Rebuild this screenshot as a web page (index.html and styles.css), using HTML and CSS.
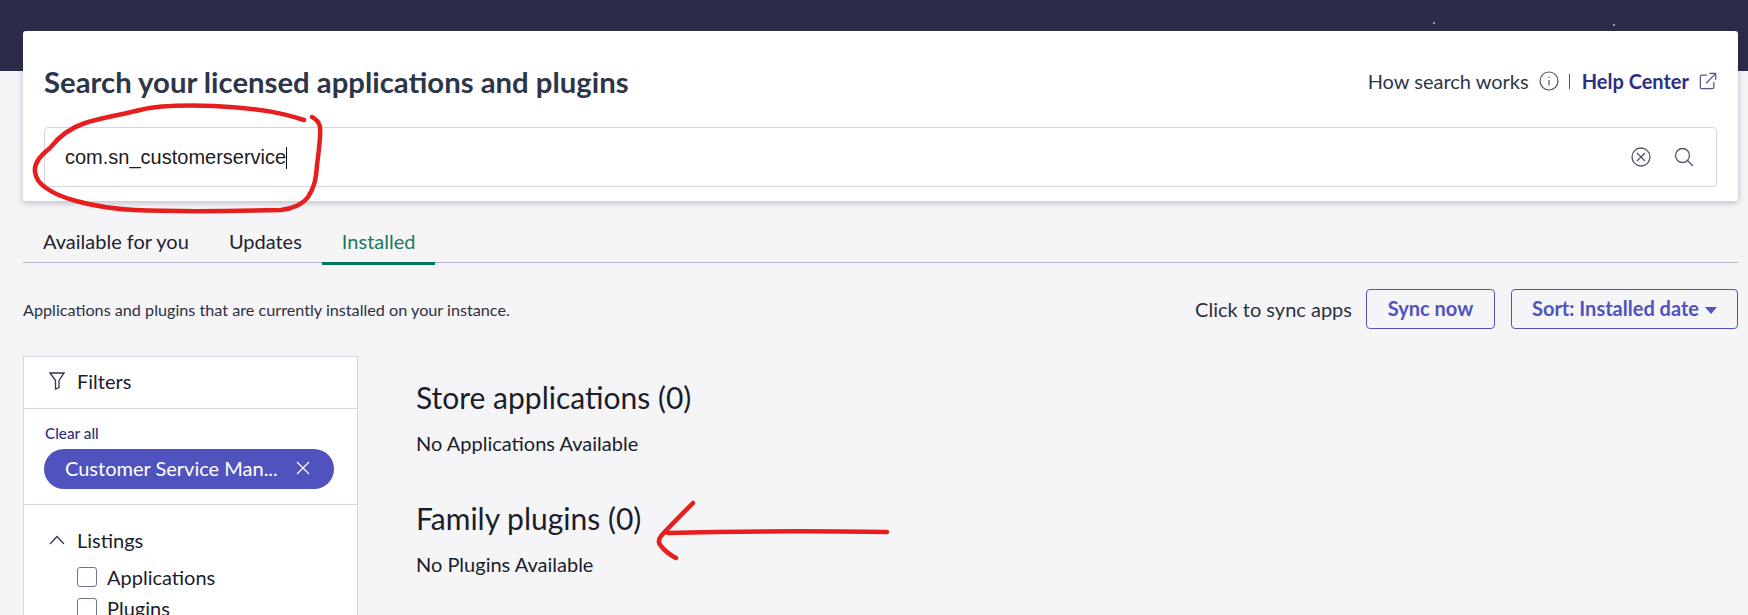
FILE: index.html
```html
<!DOCTYPE html>
<html lang="en">
  <head>
    <meta charset="UTF-8" />
    <meta name="viewport" content="width=device-width, initial-scale=1.0" />
    <title>Search your licensed applications and plugins</title>
    <link rel="stylesheet" href="styles.css">
  </head>
  <body>
    <header class="topbar"></header>
    <div class="page">
      <section class="search-card">
        <div class="search-head">
          <h1>Search your licensed applications and plugins</h1>
          <div class="search-links">
            <span>How search works</span>
            <svg class="icon-info" viewBox="0 0 20 20" width="20" height="20">
              <circle cx="10" cy="10" r="9" />
              <path d="M10 9v5.500M10 5.600v1.200" />
            </svg>
            <span class="sep"></span>
            <a href="#">Help Center</a>
            <svg class="icon-ext" viewBox="0 0 20 20" width="18" height="18">
              <path d="M9 3.500H3a1.500 1.500 0 0 0-1.500 1.500v12A1.500 1.500 0 0 0 3 18.500h12a1.500 1.500 0 0 0 1.500-1.500v-6" />
              <path d="M8 12.500 18.500 1.500M11.500 1.500h7v7" />
            </svg>
          </div>
        </div>
        <div class="search-box">
          <div class="search-value">com.sn_customerservice<span class="caret"></span></div>
          <svg class="icon-clear" viewBox="0 0 20 20" width="20" height="20">
            <circle cx="10" cy="10" r="9" />
            <path d="M6 6l8 8M14 6l-8 8" />
          </svg>
          <svg class="icon-search" viewBox="0 0 20 20" width="20" height="20">
            <circle cx="8.500" cy="8.500" r="7" />
            <path d="M13.500 13.500l5.500 5.500" />
          </svg>
        </div>
      </section>

      <nav class="tabs">
        <a href="#" class="tab">Available for you</a>
        <a href="#" class="tab">Updates</a>
        <a href="#" class="tab tab-active">Installed</a>
      </nav>

      <div class="toolbar">
        <p class="toolbar-text">Applications and plugins that are currently installed on your instance.</p>
        <div class="toolbar-actions">
          <span class="sync-label">Click to sync apps</span>
          <button class="btn btn-sync">Sync now</button>
          <button class="btn btn-sort">Sort: Installed date<span class="sort-arrow"></span></button>
        </div>
      </div>

      <div class="content">
        <aside class="filters">
          <div class="filters-head">
            <svg class="icon-funnel" viewBox="0 0 16 18" width="16" height="18">
              <path d="M1 1h14L10 8.500v7L6.500 17V8.500z" />
            </svg>
            <span>Filters</span>
          </div>
          <div class="filters-active">
            <a href="#" class="clear-all">Clear all</a>
            <div class="chip">
              <span class="chip-text">Customer Service Man...</span>
              <svg class="chip-x" viewBox="0 0 14 14" width="14" height="14">
                <path d="M1 1l12 12M13 1L1 13" />
              </svg>
            </div>
          </div>
          <div class="filters-group">
            <div class="group-title">
              <svg class="icon-chevron" viewBox="0 0 16 10" width="16" height="10">
                <path d="M1 9l7-7.500L15 9" />
              </svg>
              <span>Listings</span>
            </div>
            <label class="check-row"><span class="check"></span>Applications</label>
            <label class="check-row"><span class="check"></span>Plugins</label>
          </div>
        </aside>

        <main class="results">
          <h2>Store applications (0)</h2>
          <p>No Applications Available</p>
          <h2>Family plugins (0)</h2>
          <p>No Plugins Available</p>
        </main>
      </div>
    </div>

    <!-- hand drawn marks on top of the screenshot -->
    <svg class="marks" viewBox="0 0 1748 615" width="1748" height="615">
      <path class="mark" d="M304 120C285 114 268 109 214 106C185 105 160 105 140 110C120 115 100 118 85 123C70 128 60 135 50 148C40 156 34 163 35 172C36 180 40 184 46 188C56 195 65 198 76 201C95 206 115 209 134 210C180 212 240 211 281 210C292 209 303 204 308 197C314 188 316 180 317 165C319 150 321 135 320 127C319 122 316 119 312 117" />
      <path class="mark" d="M693 503C682 514 670 526 661 536C658 540 658 543 661 546C665 551 670 555 676 558" />
      <path class="mark" d="M887 532C820 531 740 531 668 533" />
      <rect class="speck" x="1433" y="22" width="2" height="2" />
      <rect class="speck" x="1613" y="24" width="2" height="2" />
    </svg>
  </body>
</html>
```

FILE: styles.css
```css
* {
  margin: 0;
  padding: 0;
  box-sizing: border-box;
}

body {
  font-family: Lato, "Open Sans", sans-serif;
  background-color: #f5f5f8;
  color: #1b1d2a;
  height: 100vh;
  overflow: hidden;
  position: relative;
}

a {
  text-decoration: none;
}

.topbar {
  height: 71px;
  background-color: #2b2b4a;
}

.page {
  margin-top: -40px;
  padding: 0 10px 0 23px;
}

/* search card */
.search-card {
  height: 170px;
  padding: 0 21px 0 21px;
  background-color: #fff;
  border-radius: 3px;
  box-shadow: 0 2px 6px rgba(40, 40, 70, 0.28);
}

.search-head {
  height: 96px;
  display: flex;
  justify-content: space-between;
  align-items: center;
  padding-top: 4px;
}

h1 {
  font-size: 29.300px;
  font-weight: 700;
  color: #2c3648;
}

.search-links {
  display: flex;
  align-items: center;
  font-size: 20px;
  color: #2c3648;
}

.search-links a {
  font-weight: 700;
  color: #2d2f82;
}

.icon-info {
  margin-left: 10px;
  fill: none;
  stroke: #50546a;
  stroke-width: 1.200;
}

.sep {
  width: 1px;
  height: 15px;
  margin: 0 12px 0 10px;
  background-color: #50546a;
}

.icon-ext {
  margin-left: 10px;
  fill: none;
  stroke: #55588f;
  stroke-width: 1.400;
}

.search-box {
  height: 60px;
  display: flex;
  align-items: center;
  padding: 0 22px 0 20px;
  background-color: #fff;
  border: 1px solid #d4d4de;
  border-radius: 4px;
}

.search-value {
  flex: 1;
  font-family: "Liberation Sans", Arial, sans-serif;
  font-size: 20px;
  color: #1c1c1c;
}

.caret {
  display: inline-block;
  width: 1px;
  height: 22px;
  margin-bottom: -5px;
  background-color: #111;
}

.icon-clear {
  fill: none;
  stroke: #50546a;
  stroke-width: 1.300;
}

.icon-search {
  margin-left: 23px;
  fill: none;
  stroke: #50546a;
  stroke-width: 1.300;
}

/* tabs */
.tabs {
  display: flex;
  height: 62px;
  border-bottom: 1px solid #b6b8c6;
}

.tab {
  height: 64px;
  padding: 28px 20px 0;
  font-size: 20px;
  line-height: 24px;
  color: #1f2233;
}

.tab-active {
  color: #1b7a5c;
  border-bottom: 3px solid #04795a;
}

/* text and buttons above the list */
.toolbar {
  display: flex;
  justify-content: space-between;
  align-items: center;
  margin-top: 26px;
}

.toolbar-text {
  font-size: 16.200px;
  color: #2c3040;
}

.toolbar-actions {
  display: flex;
  align-items: center;
}

.sync-label {
  font-size: 20px;
  color: #2c3040;
  margin-right: 14px;
}

.btn {
  height: 40px;
  padding-bottom: 2px;
  font-family: inherit;
  font-size: 20px;
  font-weight: 700;
  color: #5053bd;
  background-color: transparent;
  border: 1px solid #5053bd;
  border-radius: 4px;
  cursor: pointer;
}

.btn-sync {
  width: 129px;
}

.btn-sort {
  width: 227px;
  margin-left: 16px;
}

.sort-arrow {
  display: inline-block;
  margin-left: 6px;
  vertical-align: 2px;
  border-left: 6px solid transparent;
  border-right: 6px solid transparent;
  border-top: 7px solid #5053bd;
}

.content {
  display: flex;
  margin-top: 27px;
}

/* left filter panel, runs off the bottom of the window */
.filters {
  width: 335px;
  height: 259px;
  flex-shrink: 0;
  overflow: hidden;
  background-color: #fff;
  border: 1px solid #d4d4de;
  border-bottom: none;
}

.filters-head {
  height: 52px;
  display: flex;
  align-items: center;
  gap: 12px;
  padding: 0 0 3px 25px;
  font-size: 20px;
  border-bottom: 1px solid #d4d4de;
}

.icon-funnel {
  fill: none;
  stroke: #33364a;
  stroke-width: 1.300;
}

.filters-active {
  height: 96px;
  padding: 15px 20px 0 21px;
  border-bottom: 1px solid #d4d4de;
}

.clear-all {
  display: block;
  font-size: 15.300px;
  font-weight: 500;
  color: #2d2f82;
  line-height: 18px;
}

.chip {
  display: flex;
  align-items: center;
  justify-content: space-between;
  width: 290px;
  height: 40px;
  margin: 7px 0 0 -1px;
  padding: 0 24px 2px 21px;
  background-color: #5053bd;
  border-radius: 20px;
  color: #fff;
  font-size: 20px;
}

.chip-text {
  white-space: nowrap;
}

.chip-x {
  fill: none;
  stroke: #fff;
  stroke-width: 1.300;
}

.filters-group {
  padding: 23px 0 0 25px;
}

.group-title {
  display: flex;
  align-items: center;
  gap: 12px;
  font-size: 20px;
  line-height: 24px;
  margin-bottom: 9px;
}

.icon-chevron {
  fill: none;
  stroke: #33364a;
  stroke-width: 1.200;
}

.check-row {
  display: flex;
  align-items: center;
  gap: 10px;
  height: 31px;
  padding-left: 28px;
  font-size: 20px;
}

.check {
  width: 20px;
  height: 20px;
  background-color: #fff;
  border: 1px solid #71758c;
  border-radius: 3px;
}

/* right side results */
.results {
  padding: 23px 0 0 58px;
}

.results h2 {
  font-size: 30px;
  font-weight: 400;
  line-height: 36px;
}

.results p {
  font-size: 20px;
  line-height: 24px;
  margin-top: 16px;
  margin-bottom: 45px;
}

/* annotation layer */
.marks {
  position: absolute;
  top: 0;
  left: 0;
  pointer-events: none;
}

.mark {
  fill: none;
  stroke: #e61e1e;
  stroke-width: 4.500;
  stroke-linecap: round;
  stroke-linejoin: round;
}

.speck {
  fill: #8fa3a8;
}
```
